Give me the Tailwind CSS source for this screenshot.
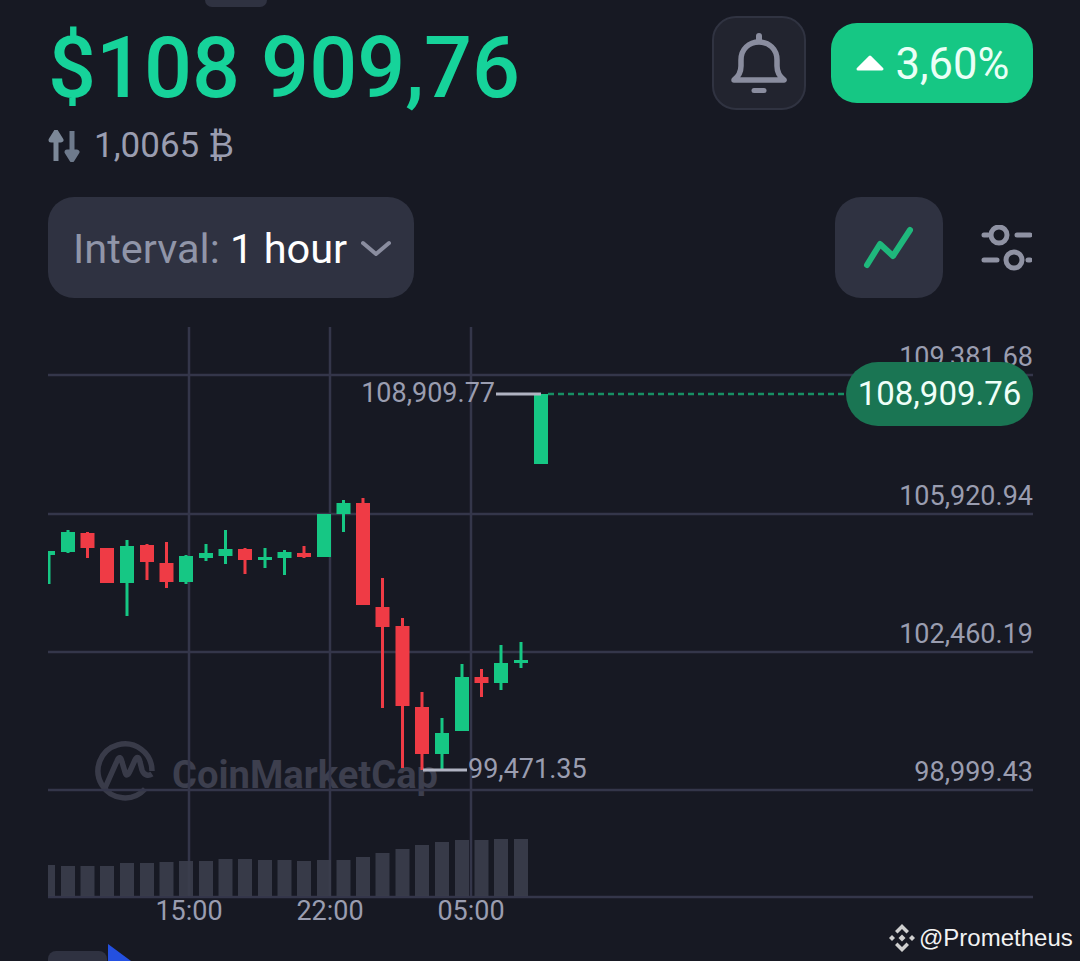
<!DOCTYPE html>
<html lang="en">
<head>
  <meta charset="UTF-8">
  <title>BTC price chart</title>
  <script src="https://cdn.jsdelivr.net/npm/@tailwindcss/browser@4"></script>
</head>
<body class="bg-[#171923]">
  <div class="relative w-[1080px] h-[961px] overflow-hidden bg-[#171923] font-['Roboto',sans-serif]">
    <div class="ml-[205px] w-[62px] h-[7px] rounded-b-lg bg-[#2f3241]"></div>

    <!-- price header -->
    <div class="flex justify-between pl-[48px] pr-[47px] h-[190px]">
      <div>
        <div class="text-[84.5px] leading-[98px] mt-[13px] font-medium text-[#16d39a] whitespace-nowrap">$108 909,76</div>
        <div class="flex items-center gap-[14px] mt-[8px] h-[40px]">
          <svg width="32" height="32" viewBox="0 0 32 32">
            <path d="M8 31V6M3 10L8 2L13 10Z" stroke="#7c8898" stroke-width="5" stroke-linejoin="round" fill="#7c8898"/>
            <path d="M24 1V26M19 22L24 30L29 22Z" stroke="#6e7a8c" stroke-width="5" stroke-linejoin="round" fill="#6e7a8c"/>
          </svg>
          <span class="text-[35px] leading-[40px] text-[#9a9db0]">1,0065 ₿</span>
        </div>
      </div>
      <div class="flex items-start gap-[25px] pt-[9px]">
        <div class="w-[94px] h-[94px] rounded-[24px] border-2 border-[#303341] bg-[#22242f] flex items-center justify-center">
          <svg width="94" height="94" viewBox="0 0 94 94" fill="none" stroke="#8a8d9f" class="shrink-0">
            <path d="M22 64C27 60 29 56 29 50V44C29 33 37 26 47 26C57 26 65 33 65 44V50C65 56 67 60 72 64Z" stroke-width="5.5" stroke-linejoin="round"/>
            <path d="M47 20V25" stroke-width="6" stroke-linecap="round"/>
            <path d="M42 74.5H52" stroke-width="5" stroke-linecap="round"/>
          </svg>
        </div>
        <div class="mt-[7px] w-[202px] h-[80px] rounded-[26px] bg-[#16c784] flex items-center justify-center gap-[11px] text-[43.5px] text-[#eafff6]">
          <svg width="30" height="18" viewBox="0 0 30 18"><path d="M15 3L27 15H3Z" fill="#fff" stroke="#fff" stroke-width="3" stroke-linejoin="round"/></svg>
          <span class="translate-y-[2px]">3,60%</span>
        </div>
      </div>
    </div>

    <!-- interval row -->
    <div class="flex items-center justify-between pl-[48px] pr-[48px]">
      <div class="w-[366px] h-[101px] rounded-[26px] bg-[#2f3241] flex items-center pl-[25px] gap-[14px] text-[41.5px]">
        <span class="translate-y-[2px] whitespace-nowrap"><span class="text-[#9095a8]">Interval:</span> <span class="text-white">1 hour</span></span>
        <svg width="30" height="18" viewBox="0 0 30 18" fill="none"><path d="M2 4L15 15L28 4" stroke="#8a8d9f" stroke-width="4" stroke-linecap="round" stroke-linejoin="round"/></svg>
      </div>
      <div class="flex items-center gap-[38px]">
        <div class="w-[108px] h-[101px] rounded-[26px] bg-[#2f3241] flex items-center justify-center">
          <svg width="52" height="44" viewBox="0 0 52 44" fill="none"><path d="M4 39L17 18L30 30L47 4" stroke="#1fb87c" stroke-width="6" stroke-linecap="round" stroke-linejoin="round"/></svg>
        </div>
        <svg width="51" height="46" viewBox="0 0 51 46" fill="none" stroke="#8f92a3" stroke-width="5" stroke-linecap="round">
          <path d="M3 10H7M36 10H49M3 35H16M47 35H49"/>
          <circle cx="18" cy="10" r="8"/>
          <circle cx="33" cy="35" r="8"/>
        </svg>
      </div>
    </div>

    <!-- chart canvas -->
    <svg id="chart" class="absolute left-0 top-[320px]" width="1080" height="641" viewBox="0 320 1080 641">
      <g fill="none" stroke="#3d3f4e" stroke-width="5.5" opacity="0.9">
        <path d="M152 771A27 27 0 1 0 145 789"/>
        <path d="M105 788L117 761C119 756 121 757 122 762L125 772C126 776 128 776 130 771L135 760C137 756 139 757 140 762L142 770C144 776 149 776 152 774"/>
      </g>
      <text x="172" y="788" font-size="38" font-weight="700" fill="#3d3f4e" font-family="Roboto" textLength="266" lengthAdjust="spacingAndGlyphs">CoinMarketCap</text>
      <g id="grid" fill="none" stroke="#34364a" stroke-width="2.5">
        <path d="M48 375H1033M48 514H1033M48 652H1033M48 790H1033M48 897H1033"/>
        <path d="M189 327V897M330 327V897M471 327V897"/>
      </g>
      <g id="volume" fill="#3b3e4c" fill-opacity="0.9"></g>
      <g id="candles"></g>
      <path d="M548 394H860" stroke="#178f63" stroke-width="2.5" stroke-dasharray="6 4"/>
      <path d="M496 394H541M423 770H467" stroke="#b0b3c2" stroke-width="3"/>
      <g font-size="27" fill="#9a9db0" font-family="Roboto">
        <text x="1033" y="366" text-anchor="end">109,381.68</text>
        <text x="1033" y="505" text-anchor="end">105,920.94</text>
        <text x="1033" y="643" text-anchor="end">102,460.19</text>
        <text x="1033" y="781" text-anchor="end">98,999.43</text>
        <text x="495" y="402" text-anchor="end">108,909.77</text>
        <text x="468" y="778">99,471.35</text>
        <text x="189" y="920" text-anchor="middle">15:00</text>
        <text x="330" y="920" text-anchor="middle">22:00</text>
        <text x="471" y="920" text-anchor="middle">05:00</text>
      </g>
    </svg>

    <!-- current price tag -->
    <div class="absolute left-[846px] top-[362px] w-[187px] h-[64px] rounded-[32px] bg-[#1a7553] flex items-center justify-center text-[33px] text-[#effff8]">108,909.76</div>

    <!-- bottom bits -->
    <div class="absolute left-[48px] top-[951px] w-[59px] h-[10px] rounded-t-lg bg-[#2f3241]"></div>
    <svg class="absolute left-[106px] top-[942px]" width="26" height="19" viewBox="0 0 26 19"><path d="M2 2L25 19H2Z" fill="#2450e0"/></svg>

    <!-- watermark -->
    <div class="absolute left-[888px] top-[922px] flex items-center gap-[3px] font-['Liberation_Sans',sans-serif] text-[24px] leading-[32px] text-[#f2f2f2]">
      <svg width="28" height="28" viewBox="0 0 28 28" fill="#cfcfcf">
        <path d="M14 0L21 7L18.5 9.5L14 5L9.5 9.5L7 7Z"/>
        <path d="M14 28L21 21L18.5 18.5L14 23L9.5 18.5L7 21Z"/>
        <path d="M14 10.5L17.5 14L14 17.5L10.5 14Z"/>
        <path d="M4 11L7 14L4 17L1 14Z"/>
        <path d="M24 11L27 14L24 17L21 14Z"/>
      </svg>
      <span>@Prometheus</span>
    </div>
  </div>

  <script>
    const GREEN = '#16c784';
    const RED = '#ef3b45';
    const NS = 'http://www.w3.org/2000/svg';

    // x, wick top, wick bottom, body top, body bottom, colour
    const candles = [
      [68, 530, 553, 532, 552, GREEN],
      [87.5, 532, 558, 533, 548, RED],
      [107, 548, 583, 548, 583, RED],
      [127, 540, 616, 546, 583, GREEN],
      [147, 544, 580, 545, 562, RED],
      [166.5, 542, 588, 563, 582, RED],
      [186, 555, 584, 556, 582, GREEN],
      [206, 544, 561, 553, 558, GREEN],
      [225.5, 530, 564, 549, 556, GREEN],
      [245, 548, 574, 549, 560, RED],
      [265, 548, 568, 557, 560, GREEN],
      [284.5, 550, 575, 552, 558, GREEN],
      [304, 546, 558, 553, 557, RED],
      [324, 514, 557, 514, 557, GREEN],
      [343.5, 500, 532, 503, 514, GREEN],
      [363, 498, 605, 503, 605, RED],
      [382.5, 578, 708, 607, 627, RED],
      [402.5, 618, 768, 626, 706, RED],
      [422, 692, 770, 707, 754, RED],
      [442, 718, 770, 733, 754, GREEN],
      [462, 664, 731, 677, 731, GREEN],
      [481.5, 669, 697, 677, 683, RED],
      [501, 645, 690, 663, 683, GREEN],
      [521, 642, 668, 660, 663, GREEN],
      [541, 394, 464, 394, 464, GREEN]
    ];

    const volumes = [
      [68, 866], [87.5, 866], [107, 866], [127, 863], [147, 863], [166.5, 862], [186, 861],
      [206, 861], [225.5, 859], [245, 859], [265, 860], [284.5, 860], [304, 861], [324, 860],
      [343.5, 860], [363, 857], [382.5, 853], [402.5, 849], [422, 845], [442, 842], [462, 840],
      [481.5, 840], [501, 839], [521, 839]
    ];

    function addRect(parent, x, y, w, h, fill) {
      const r = document.createElementNS(NS, 'rect');
      r.setAttribute('x', x);
      r.setAttribute('y', y);
      r.setAttribute('width', w);
      r.setAttribute('height', h);
      if (fill) r.setAttribute('fill', fill);
      parent.appendChild(r);
    }

    const candleGroup = document.getElementById('candles');
    const volumeGroup = document.getElementById('volume');

    // first candle is cut off by the chart's left edge
    addRect(candleGroup, 48, 551, 2.5, 33, GREEN);
    addRect(candleGroup, 48, 551, 7, 4, GREEN);
    addRect(volumeGroup, 48, 865, 7, 31);

    candles.forEach(([x, wt, wb, bt, bb, color]) => {
      addRect(candleGroup, x - 1.5, wt, 3, wb - wt, color);
      addRect(candleGroup, x - 7, bt, 14, bb - bt, color);
    });
    volumes.forEach(([x, top]) => addRect(volumeGroup, x - 7, top, 14, 896 - top));
  </script>
</body>
</html>
